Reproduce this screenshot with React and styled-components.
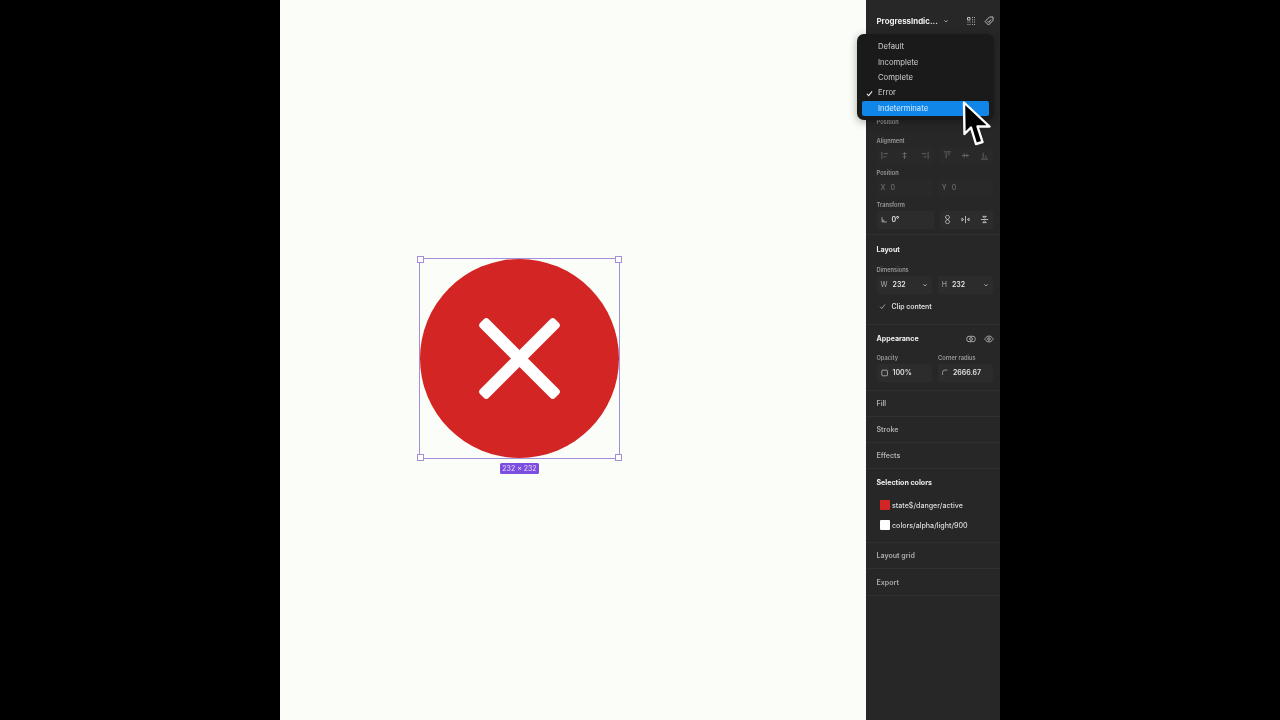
import React from "react";
import styled, { createGlobalStyle } from "styled-components";

const Global = createGlobalStyle`
  html, body { margin: 0; padding: 0; background: #000; height: 100%; overflow: hidden; }
  body { font-family: Inter, "Liberation Sans", sans-serif; -webkit-font-smoothing: antialiased; }
  #root { height: 100%; }
`;

const Page = styled.div`
  display: flex;
  justify-content: center;
  width: 1280px;
  height: 720px;
  background: #000;
`;
const Stage = styled.div`
  position: relative;
  display: flex;
  width: 720px;
  height: 720px;
  filter: blur(0.3px);
`;
const Canvas = styled.main`
  position: relative;
  flex: 1;
  background: #fbfef8;
`;
const Selection = styled.div`
  position: absolute;
  left: 139px;
  top: 258px;
  width: 201px;
  height: 201px;
  box-sizing: border-box;
  border: 1px solid #a48fd8;
  display: flex;
  align-items: center;
  justify-content: center;
`;
const Handle = styled.span`
  position: absolute;
  width: 5px;
  height: 5px;
  background: #fff;
  border: 1px solid #a48fd8;
  ${(p) => (p.$top ? "top: -3px;" : "bottom: -2.5px;")}
  ${(p) => (p.$left ? "left: -3px;" : "right: -3px;")}
`;
const Badge = styled.div`
  position: absolute;
  left: 80px;
  top: 204px;
  width: 39px;
  height: 10.5px;
  border-radius: 1.5px;
  background: #7d4fe0;
  color: #e6dcfa;
  font-size: 7px;
  line-height: 11px;
  text-align: center;
  white-space: nowrap;
`;
const Panel = styled.aside`
  width: 134px;
  height: 720px;
  box-sizing: border-box;
  background: #272727;
  color: #dcdcdc;
  flex: none;
`;
const Header = styled.header`
  display: flex;
  align-items: center;
  height: 42px;
  padding: 0 6px 0 10.5px;
  color: #ededed;
  font-size: 7.9px;
  font-weight: 700;
`;
const HeaderName = styled.span`
  white-space: nowrap;
`;
const HeaderIcons = styled.div`
  display: flex;
  align-items: center;
  gap: 8px;
  margin-left: auto;
  color: #bdbdbd;
`;
const Caret = styled.svg`
  width: 6px;
  height: 6px;
  flex: none;
  margin-left: ${(p) => p.$gap || 0}px;
  color: #a8a8a8;
`;
const Covered = styled.div`
  height: 74.5px;
`;
const Section = styled.section`
  box-sizing: border-box;
  padding: 0 7px 0 10.5px;
  border-bottom: 1px solid #303030;
  height: ${(p) => p.$h}px;
`;
const Title = styled.h3`
  margin: 0;
  display: flex;
  align-items: center;
  justify-content: space-between;
  height: ${(p) => p.$h || 25}px;
  font-size: 7.05px;
  font-weight: ${(p) => (p.$muted ? 600 : 650)};
  color: ${(p) => (p.$muted ? "#adadad" : "#eeeeee")};
`;
const TitleIcons = styled.div`
  display: flex;
  gap: 8px;
  margin-right: -1px;
  color: #c8c8c8;
`;
const Label = styled.div`
  height: 10px;
  line-height: 10px;
  font-size: 5.7px;
  font-weight: 600;
  color: ${(p) => (p.$dim ? "#757575" : "#9a9a9a")};
  margin-bottom: ${(p) => p.$mb || 0}px;
  white-space: nowrap;
`;
const LabelPair = styled.div`
  display: grid;
  grid-template-columns: 61.500px 1fr;
`;
const Row = styled.div`
  display: grid;
  grid-template-columns: ${(p) => p.$cols || "1fr 1fr"};
  column-gap: 6px;
  height: 20px;
  margin-bottom: 2px;
`;
const Field = styled.div`
  display: flex;
  align-items: center;
  height: 18px;
  margin-top: 1px;
  padding: 0 4px;
  gap: ${(p) => p.$gap || 5}px;
  box-sizing: border-box;
  border-radius: 2px;
  background: ${(p) => (p.$ghost ? "#292929" : "#2c2c2c")};
  font-size: 7px;
  font-weight: 500;
  color: ${(p) => (p.$dim ? "#6e6e6e" : "#e0e0e0")};
  white-space: nowrap;
`;
const Split = styled(Field)`
  gap: 5px;
  color: #7c7c7c;
`;
const Prefix = styled.span`
  color: ${(p) => (p.$bright ? "#9a9a9a" : "#6e6e6e")};
`;
const ValueText = styled.span`
  font-weight: 600;
  color: ${(p) => (p.$dim ? "#6e6e6e" : "#e0e0e0")};
`;
const End = styled.span`
  margin-left: auto;
  display: flex;
`;
const ClipRow = styled.div`
  display: flex;
  align-items: center;
  gap: 6px;
  height: 20px;
  margin-top: 1px;
  padding-left: 2px;
  font-size: 6.9px;
  font-weight: 600;
  color: #dedede;
`;
const ColorRow = styled.div`
  display: flex;
  align-items: center;
  gap: 2.500px;
  height: 20px;
  width: 99px;
  padding-left: 3px;
  box-sizing: border-box;
  font-size: 7.1px;
  font-weight: 500;
  color: #dcdcdc;
  white-space: nowrap;
`;
const Swatch = styled.span`
  width: 10px;
  height: 10px;
  border-radius: 1px;
  background: ${(p) => p.$c};
  flex: none;
`;
const Menu = styled.div`
  position: absolute;
  left: 577px;
  top: 34px;
  width: 137px;
  height: 86px;
  box-sizing: border-box;
  padding: 5.300px 5px;
  border-radius: 7px;
  background: #1a1a1a;
  box-shadow: 0 2px 8px rgba(0, 0, 0, 0.35);
`;
const Item = styled.div`
  position: relative;
  height: 15.350px;
  line-height: 15.350px;
  padding-left: 16px;
  width: 127px;
  box-sizing: border-box;
  border-radius: 2px;
  font-size: 7.7px;
  color: ${(p) => (p.$active ? "#d8ecff" : "#cfcfcf")};
  background: ${(p) => (p.$active ? "#0f86e8" : "transparent")};
`;
const Check = styled.svg`
  position: absolute;
  left: 3.500px;
  top: 4.200px;
  width: 7px;
  height: 7px;
`;
const Cursor = styled.svg`
  position: absolute;
  left: 679px;
  top: 98px;
  width: 34px;
  height: 50px;
`;
const AlignGroup = styled.div`
  display: flex;
  align-items: center;
  justify-content: space-between;
  height: 18px;
  margin-top: 1px;
  padding: ${(p) => (p.$end ? "0 4.500px 0 3px" : "0 5px 0 4px")};
  border-radius: 2px;
  background: ${(p) => (p.$ghost ? "#292929" : "#2c2c2c")};
  color: ${(p) => (p.$ghost ? "#767676" : "#c4c4c4")};
`;

const I = ({ w = 9, children, sw = 0.8 }) => (
  <svg width={w} height={w} viewBox="0 0 10 10" fill="none" stroke="currentColor" strokeWidth={sw}>
    {children}
  </svg>
);

const CaretDown = ({ gap }) => (
  <Caret $gap={gap} viewBox="0 0 6 6" fill="none" stroke="currentColor" strokeWidth="0.9">
    <path d="M1.300 2.300 3 4l1.700-1.700" />
  </Caret>
);

export default function App() {
  return (
    <Page>
      <Global />
      <Stage>
        <Canvas>
          <Selection>
            <svg width="199" height="199" viewBox="0 0 199 199">
              <circle cx="99.500" cy="99.500" r="99.500" fill="#d42525" />
              <g fill="#fff" transform="rotate(45 99.500 99.500)">
                <rect x="46.500" y="93.500" width="106" height="12" rx="3.500" />
                <rect x="93.500" y="46.500" width="12" height="106" rx="3.500" />
              </g>
            </svg>
            <Handle $top $left />
            <Handle $top />
            <Handle $left />
            <Handle />
            <Badge>232 × 232</Badge>
          </Selection>
        </Canvas>
        <Panel>
          <Header>
            <HeaderName>ProgressIndic...</HeaderName>
            <CaretDown gap={5} />
            <HeaderIcons>
              <I w={10} sw={1}>
                <path d="M1.500 1.500h2.500v2.500H1.500zM6 1.500h.9M8 1.500h.9M6 3.800h.9M8 3.800h.9M1.500 6h.9M3.500 6h.9M6 6h.9M8 6h.9M1.500 8.500h.9M3.500 8.500h.9M6 8.500h.9M8 8.500h.9" />
              </I>
              <I w={10} sw={1}>
                <path d="M5.500 1H9v3.500L4.500 9 1 5.500z" />
                <path d="M3.500 5.200 4.800 6.500 7 3.500" />
              </I>
            </HeaderIcons>
          </Header>
          <Covered />
          <Section $h={118.5}>
            <Label $mb={9}>Position</Label>
            <Label>Alignment</Label>
            <Row $cols="57px 53.500px">
              <AlignGroup $ghost>
                <I w={9}><path d="M1 1v8M3 3h5M3 6.500h3" /></I>
                <I w={9}><path d="M5 1v8M2.500 3h5M3 6.500h4" /></I>
                <I w={9}><path d="M9 1v8M2 3h5M4 6.500h3" /></I>
              </AlignGroup>
              <AlignGroup $ghost $end>
                <I w={9}><path d="M1 1h8M3.500 2v6M6.500 2v3" /></I>
                <I w={9}><path d="M1 5h8M3.500 2.500v5M6.500 3v4" /></I>
                <I w={9}><path d="M1 9h8M3.500 2v6M6.500 5v3" /></I>
              </AlignGroup>
            </Row>
            <Label>Position</Label>
            <Row>
              <Field $ghost $dim><Prefix>X</Prefix><span>0</span></Field>
              <Field $ghost $dim><Prefix>Y</Prefix><span>0</span></Field>
            </Row>
            <Label>Transform</Label>
            <Row $cols="57px 53.500px">
              <Field $gap={4}>
                <I w={7}><path d="M1.500 1.500v7h7M1.500 5.500a3 3 0 0 1 3 3" /></I>
                <ValueText>0°</ValueText>
              </Field>
              <AlignGroup $end>
                <I w={9} sw={1}><path d="M3 3.500a2.200 2.200 0 1 1 4 0L3 6.500a2.200 2.200 0 1 0 4 0z" /></I>
                <I w={9} sw={1}><path d="M5 1v8M1 3.500v3l2-1.500zM9 3.500v3L7 5z" /></I>
                <I w={9} sw={1}><path d="M1 5h8M3 1.500h4L5 3.500zM3 8.500h4L5 6.500z" /></I>
              </AlignGroup>
            </Row>
          </Section>
          <Section $h={90}>
            <Title $h={29.5}>Layout</Title>
            <Label>Dimensions</Label>
            <Row>
              <Split>
                <Prefix $bright>W</Prefix>
                <ValueText>232</ValueText>
                <End><CaretDown /></End>
              </Split>
              <Split>
                <Prefix $bright>H</Prefix>
                <ValueText>232</ValueText>
                <End><CaretDown /></End>
              </Split>
            </Row>
            <ClipRow>
              <I w={7} sw={0.9}><path d="M1.500 5.300 4 8l4.500-6" /></I>
              Clip content
            </ClipRow>
          </Section>
          <Section $h={66}>
            <Title $h={27.5}>
              Appearance
              <TitleIcons>
                <I w={10}><rect x=".8" y="2.300" width="8.400" height="5.400" rx="2.200" /><circle cx="5" cy="5" r="1.400" /></I>
                <I w={10}><path d="M.7 5S2.500 2 5 2s4.300 3 4.300 3S7.500 8 5 8 .7 5 .7 5z" /><circle cx="5" cy="5" r="1.300" /></I>
              </TitleIcons>
            </Title>
            <Label>
              <LabelPair>
                <span>Opacity</span>
                <span>Corner radius</span>
              </LabelPair>
            </Label>
            <Row $cols="55.500px 55px">
              <Field $gap={4}>
                <I w={8}><rect x="1" y="1.500" width="7" height="7" rx="1" /></I>
                <ValueText>100%</ValueText>
              </Field>
              <Field $gap={4}>
                <I w={7}><path d="M.8 8.500V5a3.500 3.500 0 0 1 3.500-3.500h3.500" /></I>
                <ValueText>2666.67</ValueText>
              </Field>
            </Row>
          </Section>
          <Section $h={26}><Title $muted>Fill</Title></Section>
          <Section $h={26}><Title $muted>Stroke</Title></Section>
          <Section $h={26}><Title $muted>Effects</Title></Section>
          <Section $h={74}>
            <Title $h={26}>Selection colors</Title>
            <ColorRow><Swatch $c="#d42525" />state$/danger/active</ColorRow>
            <ColorRow><Swatch $c="#ffffff" />colors/alpha/light/900</ColorRow>
          </Section>
          <Section $h={26}><Title $muted>Layout grid</Title></Section>
          <Section $h={27}><Title $muted $h={26}>Export</Title></Section>
        </Panel>
        <Menu>
          <Item>Default</Item>
          <Item>Incomplete</Item>
          <Item>Complete</Item>
          <Item>
            <Check viewBox="0 0 8 8" fill="none" stroke="#eee" strokeWidth="1.200"><path d="M1 4.300 3 6.500 7 1.500" /></Check>
            Error
          </Item>
          <Item $active>Indeterminate</Item>
        </Menu>
        <Cursor viewBox="0 0 34 50">
          <path d="M5 4.500 L5.500 36 L12 29.500 L17 46 L23.500 44 L18.500 28.500 L30.500 28.500 Z" fill="#000" stroke="#fff" strokeWidth="2.400" strokeLinejoin="round" />
        </Cursor>
      </Stage>
    </Page>
  );
}
